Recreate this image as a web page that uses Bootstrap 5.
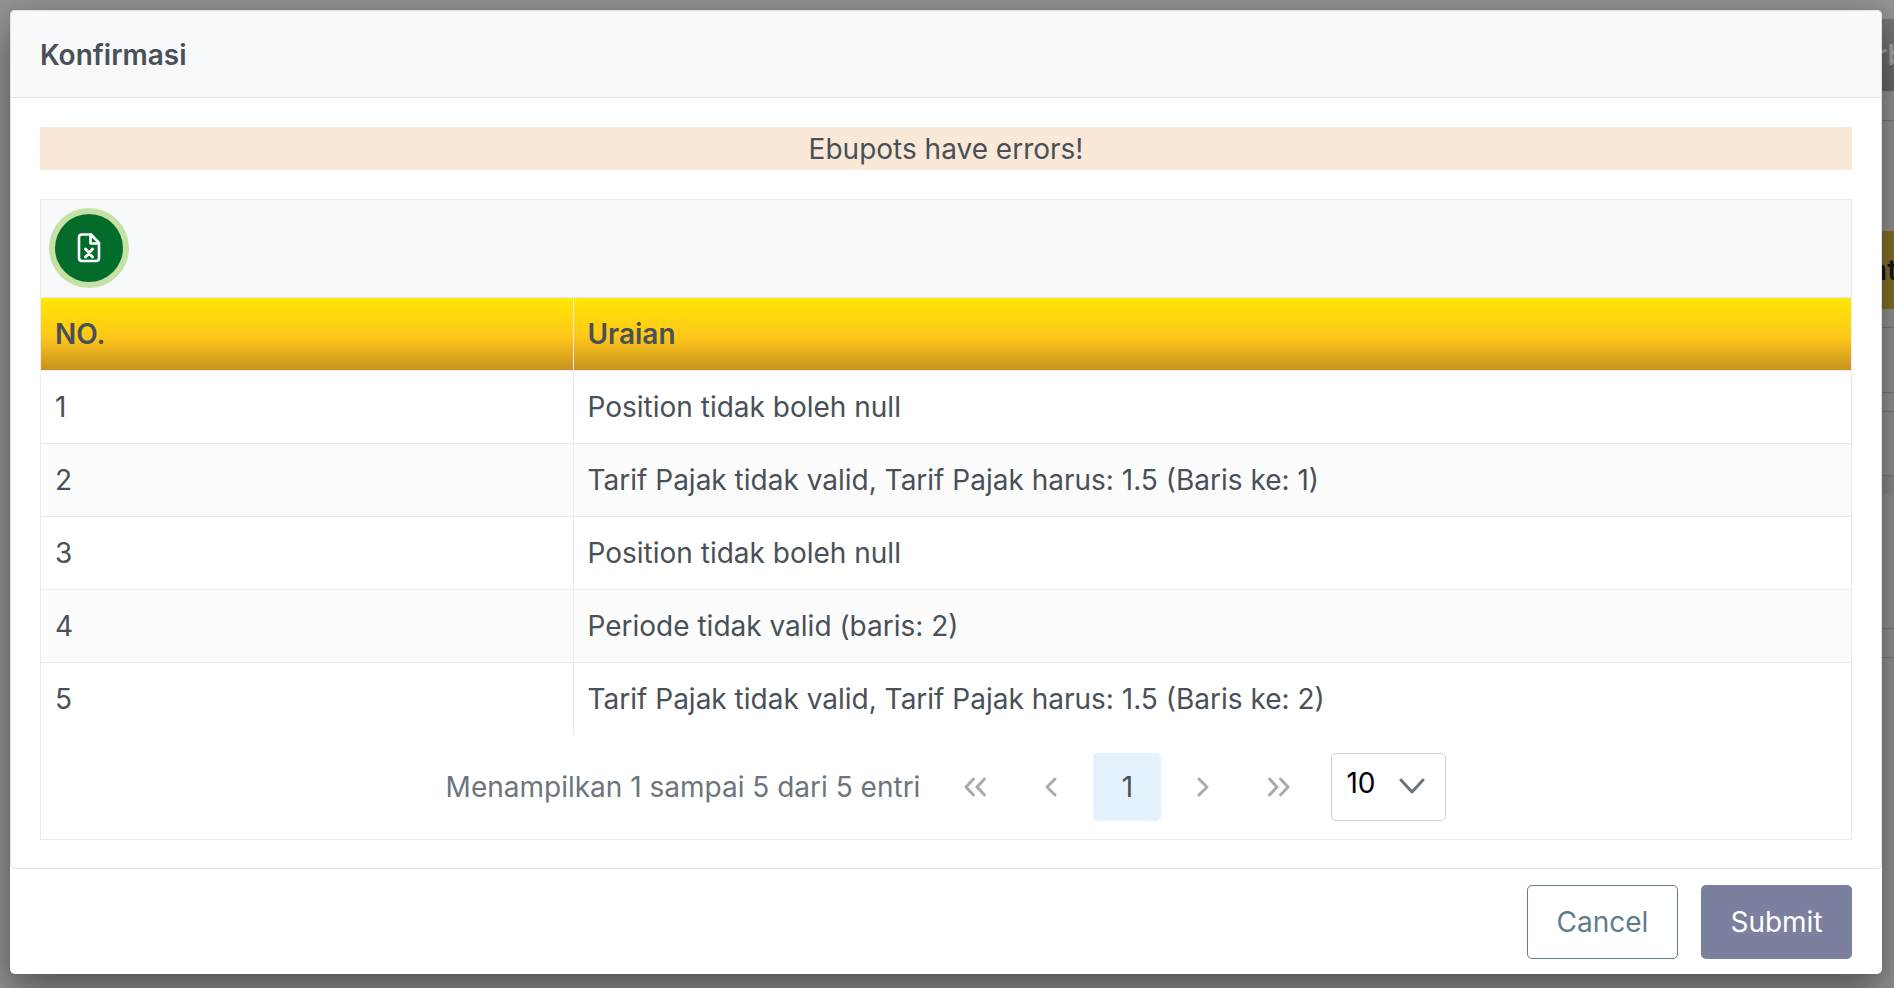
<!DOCTYPE html>
<html lang="id">
<head>
<meta charset="utf-8">
<meta name="viewport" content="width=device-width, initial-scale=1">
<title>Konfirmasi</title>
<link href="https://cdn.jsdelivr.net/npm/bootstrap@5.3.0/dist/css/bootstrap.min.css" rel="stylesheet">
<style>
body{font-family:Inter,"Liberation Sans",sans-serif;font-size:28px;line-height:43px;color:#495057;background:#929292;overflow:hidden}
.page-behind{position:absolute;inset:0;overflow:hidden}
.behind-strip{position:absolute;right:0;width:24px;white-space:nowrap;font-weight:600}
.behind-tab{width:18px;top:19px;height:72px;line-height:72px;background:linear-gradient(#757575,#666);color:#a0a0a0}
.behind-head{top:231px;height:78px;line-height:78px;background:#857029;color:#161719}
.behind-band{top:475px;height:19px;background:#8a8a8a}
.behind-line{position:absolute;right:0;width:24px;height:1px;background:#74767a}
.overlay{position:relative;min-height:100vh;padding:10px 12px 14px 10px}
.dialog{background:#fff;border-radius:5px;box-shadow:0 20px 40px rgba(0,0,0,.4),0 0 14px rgba(0,0,0,.08)}
.dialog-head{height:88px;padding:2px 29px 0;background:#f8f9fb;border:1px solid #dee2e6;border-radius:5px 5px 0 0}
.dialog-head h1{font-size:28px;font-weight:600;line-height:43px}
.dialog-main{padding:29px 29px 28px;border:1px solid #dee2e6;border-top:0;border-radius:0 0 5px 5px}
.notice{background:#fae9d8;margin-bottom:29px;padding-top:1px;line-height:42px}
.grid-box{border:1px solid #e9ecef}
.toolbar-row{height:98px;padding:0 14px 2px;background:#f8f9fb;border-bottom:1px solid #e9ecef}
.btn-excel{width:68px;height:68px;background:#046c2a;color:#fff;box-shadow:0 0 0 6px #c5e1a5}
.err-table{table-layout:fixed;color:#495057}
.err-table th,.err-table td{height:73px;padding:2px 14px 0;border:0;border-top:1px solid #e9ecef;vertical-align:middle;box-shadow:none;color:inherit}
.err-table th+th,.err-table td+td{border-left:1px solid #e9ecef}
.err-table thead tr{background:linear-gradient(#ffe805,#fec61a 55%,#c79220)}
.err-table thead th{background:transparent;border-top:0;font-weight:600;height:72px}
.err-table tbody tr:nth-child(even) td{background:#fcfcfc}
.col-no{width:532px}
.pager{height:104px;padding-bottom:1px;color:#6c757d}
.pager-info{margin-right:17px;padding-top:2px}
.pg{width:68px;height:68px;padding:0;border:0;border-radius:5px;background:transparent;color:#a6abaf;display:flex;align-items:center;justify-content:center;margin:0 4px}
.pg[aria-current]{background:#e3f2fd;color:#495057;padding-top:2px}
.size-wrap{position:relative;margin-left:14px}
.size-pick{appearance:none;display:block;width:115px;height:68px;padding:0 14px 7px;border:1px solid #ced4da;border-radius:5px;background:#fff;color:#000}
.size-wrap svg{position:absolute;right:21px;top:24px;pointer-events:none}
.dialog-foot{height:105px;padding:0 30px;gap:23px}
.act{height:74px;font-size:28px;border-radius:5px;width:151px;padding:0}
.act-cancel{color:#607d8b;border-color:#607d8b}
.act-submit{color:#fff;background:#7b809f}
</style>
<script src="https://cdn.jsdelivr.net/npm/bootstrap@5.3.0/dist/js/bootstrap.bundle.min.js"></script>
</head>
<body>
<div class="page-behind" aria-hidden="true">
  <div class="behind-strip behind-tab">rb</div>
  <div class="behind-strip behind-head">nt</div>
  <div class="behind-strip behind-band"></div>
  <div class="behind-line" style="top:120px"></div>
  <div class="behind-line" style="top:327px"></div>
  <div class="behind-line" style="top:392px"></div>
  <div class="behind-line" style="top:411px"></div>
  <div class="behind-line" style="top:475px"></div>
  <div class="behind-line" style="top:628px"></div>
  <div class="behind-line" style="top:657px"></div>
</div>
<div class="overlay">
  <div class="dialog" role="dialog" aria-labelledby="dlg-title">
    <header class="dialog-head d-flex align-items-center"><h1 class="m-0" id="dlg-title">Konfirmasi</h1></header>
    <main class="dialog-main">
      <div class="notice text-center">Ebupots have errors!</div>
      <div class="grid-box">
        <div class="toolbar-row d-flex align-items-center">
          <button type="button" class="btn-excel btn rounded-circle border-0 p-0 d-flex align-items-center justify-content-center" aria-label="Ekspor Excel">
            <svg width="24" height="30" viewBox="0 0 24 30" fill="none" stroke="currentColor" stroke-width="2.600" stroke-linejoin="round" stroke-linecap="round"><path d="M14 1.500H5Q2 1.500 2 4.500V25Q2 28 5 28H19Q22 28 22 25V10Z"/><path d="M13.500 1.500V10.500H22"/><path d="M8.500 16L15.500 24M15.500 16L8.500 24" stroke-width="2.800"/></svg>
          </button>
        </div>
        <table class="table err-table mb-0">
          <colgroup><col class="col-no"><col></colgroup>
          <thead><tr><th scope="col">NO.</th><th scope="col">Uraian</th></tr></thead>
          <tbody>
            <tr><td>1</td><td>Position tidak boleh null</td></tr>
            <tr><td>2</td><td>Tarif Pajak tidak valid, Tarif Pajak harus: 1.5 (Baris ke: 1)</td></tr>
            <tr><td>3</td><td>Position tidak boleh null</td></tr>
            <tr><td>4</td><td>Periode tidak valid (baris: 2)</td></tr>
            <tr><td>5</td><td>Tarif Pajak tidak valid, Tarif Pajak harus: 1.5 (Baris ke: 2)</td></tr>
          </tbody>
        </table>
        <nav class="pager d-flex align-items-center justify-content-center" aria-label="Halaman">
          <span class="pager-info">Menampilkan 1 sampai 5 dari 5 entri</span>
          <button type="button" class="pg" aria-label="Pertama"><svg width="24" height="20" viewBox="0 0 24 20" fill="none" stroke="currentColor" stroke-width="3" stroke-linecap="round" stroke-linejoin="round"><path d="M10.500 2L3 10L10.500 18M21.500 2L14 10L21.500 18"/></svg></button>
          <button type="button" class="pg" aria-label="Sebelumnya"><svg width="12" height="20" viewBox="0 0 12 20" fill="none" stroke="currentColor" stroke-width="3" stroke-linecap="round" stroke-linejoin="round"><path d="M10 2L2 10L10 18"/></svg></button>
          <button type="button" class="pg" aria-current="page">1</button>
          <button type="button" class="pg" aria-label="Berikutnya"><svg width="12" height="20" viewBox="0 0 12 20" fill="none" stroke="currentColor" stroke-width="3" stroke-linecap="round" stroke-linejoin="round"><path d="M2 2L10 10L2 18"/></svg></button>
          <button type="button" class="pg" aria-label="Terakhir"><svg width="24" height="20" viewBox="0 0 24 20" fill="none" stroke="currentColor" stroke-width="3" stroke-linecap="round" stroke-linejoin="round"><path d="M2.500 2L10 10L2.500 18M13.500 2L21 10L13.500 18"/></svg></button>
          <div class="size-wrap">
            <select class="size-pick" aria-label="Baris per halaman"><option>10</option></select>
            <svg width="26" height="18" viewBox="0 0 26 18" fill="none" stroke="#6c757d" stroke-width="3" stroke-linecap="round" stroke-linejoin="round"><path d="M2 3L13 15L24 3"/></svg>
          </div>
        </nav>
      </div>
    </main>
    <footer class="dialog-foot d-flex align-items-center justify-content-end">
      <button type="button" class="btn act act-cancel">Cancel</button>
      <button type="button" class="btn act act-submit">Submit</button>
    </footer>
  </div>
</div>
</body>
</html>
